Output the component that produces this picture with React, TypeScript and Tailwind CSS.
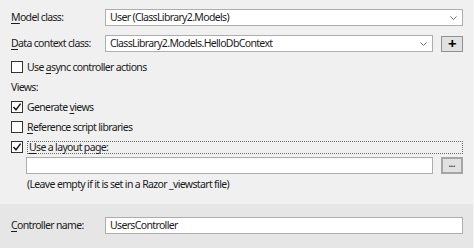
import React from "react";

const font = { fontFamily: '"Noto Sans", "Open Sans", sans-serif' };

const Chevron = () => (
  <svg width="7" height="4" viewBox="0 0 7 4" className="shrink-0">
    <path d="M0.5 0.5 L3.5 3.5 L6.5 0.5" fill="none" stroke="#6d6d6d" strokeWidth="1" />
  </svg>
);

const CheckBox = ({ checked }: { checked?: boolean }) => (
  <div className="w-[12px] h-[12px] border border-[#333333] bg-white shrink-0 flex items-center justify-center">
    {checked && (
      <svg width="10" height="10" viewBox="0 0 10 10">
        <path d="M1.5 5 L4 7.8 L8.6 1.6" fill="none" stroke="#1a1a1a" strokeWidth="1.5" />
      </svg>
    )}
  </div>
);

const Combo = ({ value, className }: { value: string; className?: string }) => (
  <div
    className={
      "h-[17px] bg-white border border-[#adadad] flex items-center pl-[4px] pr-[5px] " +
      (className || "")
    }
  >
    <span className="flex-1 whitespace-nowrap">{value}</span>
    <Chevron />
  </div>
);

const Label = ({ k, rest }: { k: string; rest: string }) => (
  <span className="w-[94px] shrink-0">
    <span className="underline underline-offset-[2px]">{k}</span>
    {rest}
  </span>
);

export default function App() {
  return (
    <div
      className="w-[474px] h-[248px] flex flex-col text-[10.5px] tracking-[-0.65px] text-[#1b1b1b] leading-none border-r border-[#f8f8f8]"
      style={font}
    >
      {/* main settings */}
      <div className="h-[204px] bg-[#f0f0f0] pl-[11px] pr-[10px] pt-[9px] flex flex-col">
        <div className="flex items-center">
          <Label k="M" rest="odel class:" />
          <Combo value="User (ClassLibrary2.Models)" className="flex-1" />
        </div>

        <div className="flex items-center mt-[9px]">
          <Label k="D" rest="ata context class:" />
          <Combo value="ClassLibrary2.Models.HelloDbContext" className="flex-1" />
          <div className="ml-[8px] w-[22px] h-[16px] bg-[#e1e1e1] border border-[#8f8f8f] flex items-center justify-center text-[15px] font-bold text-black leading-none pb-[1px]">
            +
          </div>
        </div>

        <div className="flex items-center gap-[4px] h-[20px] mt-[5px]">
          <CheckBox />
          <span>
            Use <span className="underline underline-offset-[2px]">a</span>sync controller actions
          </span>
        </div>

        <div className="flex items-center h-[20px]">Views:</div>

        <div className="flex items-center gap-[4px] h-[20px]">
          <CheckBox checked />
          <span>
            Generate <span className="underline underline-offset-[2px]">v</span>iews
          </span>
        </div>

        <div className="flex items-center gap-[4px] h-[20px]">
          <CheckBox />
          <span>
            <span className="underline underline-offset-[2px]">R</span>eference script libraries
          </span>
        </div>

        <div className="flex items-center gap-[4px] h-[20px]">
          <CheckBox checked />
          <div className="flex-1 h-[13px] border border-dotted border-[#6a6a6a] flex items-center pl-[1px]">
            <span>
              <span className="underline underline-offset-[2px]">U</span>se a layout page:
            </span>
          </div>
        </div>

        <div className="flex items-center pl-[15px]">
          <div className="flex-1 h-[17px] bg-white border border-[#adadad]" />
          <div className="ml-[8px] w-[22px] h-[17px] bg-[#e1e1e1] border-2 border-[#a5a5a5] flex items-center justify-center text-[8px] font-bold tracking-normal pb-[3px]">
            ...
          </div>
        </div>

        <div className="flex items-center h-[20px] pl-[16px]">
          (Leave empty if it is set in a Razor _viewstart file)
        </div>
      </div>

      {/* controller name */}
      <div className="flex-1 bg-[#e6e6e6] pl-[11px] pr-[10px] flex items-center pb-[1px]">
        <Label k="C" rest="ontroller name:" />
        <div className="flex-1 h-[17px] bg-white border border-[#adadad] flex items-center pl-[4px]">
          UsersController
        </div>
      </div>
    </div>
  );
}
